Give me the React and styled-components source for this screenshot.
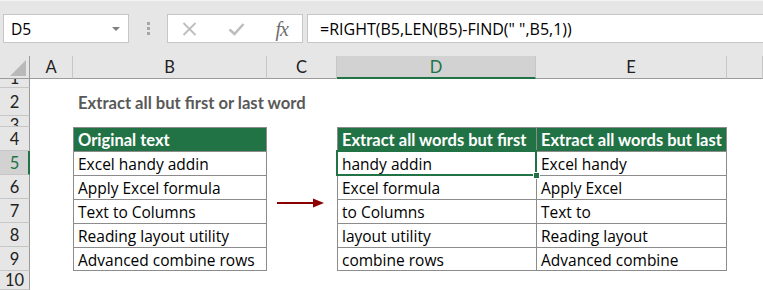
import React from 'react';
import styled, { createGlobalStyle } from 'styled-components';

const GREEN = '#217346';
const FONT = 'Lato, "Open Sans", sans-serif';
const TEXT_FONT = '"Open Sans", Lato, sans-serif';

const GlobalStyle = createGlobalStyle`
  html, body {
    margin: 0;
    padding: 0;
    background: #fff;
  }
  body {
    font-family: ${FONT};
    color: #000;
  }
`;

const Window = styled.div`
  width: 763px;
  height: 290px;
  overflow: hidden;
  background: #fff;
`;

// formula bar
const FormulaBar = styled.div`
  height: 56px;
  box-sizing: border-box;
  background: #e6e6e6;
  border-top: 1px solid #f4f4f4;
  display: flex;
  align-items: flex-start;
  padding: 13px 0 0 3px;
`;

const Box = styled.div`
  height: 29px;
  box-sizing: border-box;
  background: #fff;
  border: 1px solid #c6c6c6;
  display: flex;
  align-items: center;
`;

const NameBox = styled(Box)`
  width: 126px;
  padding: 0 8px 0 7px;
  justify-content: space-between;
  font-family: ${TEXT_FONT};
  font-size: 15.6px;
`;

const DropArrow = styled.span`
  width: 0;
  height: 0;
  border-left: 4px solid transparent;
  border-right: 4px solid transparent;
  border-top: 4px solid #7f7f7f;
`;

const Grip = styled.div`
  width: 38px;
  height: 29px;
  display: flex;
  flex-direction: column;
  align-items: center;
  justify-content: center;
  gap: 2px;
  span {
    width: 3px;
    height: 3px;
    background: #a6a6a6;
  }
`;

const ButtonBox = styled(Box)`
  width: 136px;
  padding: 0 14px 0 14px;
  justify-content: space-between;
`;

const Fx = styled.span`
  font-family: "Liberation Serif", serif;
  font-style: italic;
  font-size: 20px;
  color: #6e6e6e;
  letter-spacing: -1px;
  margin-top: 1px;
`;

const FormulaInput = styled(Box)`
  flex: 1;
  margin-left: 4px;
  margin-right: -2px;
  padding-left: 12px;
  font-family: ${TEXT_FONT};
  font-size: 16px;
  white-space: pre;
`;

// sheet
const Sheet = styled.div`
  position: relative;
  display: grid;
  grid-template-columns: 30px 43px 194px 70px 199px 191px 1fr;
  grid-template-rows: 23px 9px 28px 11px repeat(6, 24px) 1fr;
  height: 234px;
`;

const Corner = styled.div`
  grid-column: 1;
  grid-row: 1;
  background: #e6e6e6;
  border-right: 1px solid #9b9b9b;
  border-bottom: 1px solid #9b9b9b;
  position: relative;
  &::after {
    content: '';
    position: absolute;
    right: 3px;
    bottom: 2px;
    width: 0;
    height: 0;
    border-left: 16px solid transparent;
    border-bottom: 16px solid #b9b9b9;
  }
`;

const ColHead = styled.div`
  grid-column: ${(p) => p.$col};
  grid-row: 1;
  box-sizing: border-box;
  background: ${(p) => (p.$active ? '#d2d2d2' : '#e6e6e6')};
  color: ${(p) => (p.$active ? GREEN : '#222')};
  border-right: 1px solid #c6c6c6;
  border-bottom: ${(p) => (p.$active ? `2px solid ${GREEN}` : '1px solid #9b9b9b')};
  display: flex;
  align-items: center;
  justify-content: center;
  font-size: 16.5px;
  padding-top: ${(p) => (p.$active ? '1px' : '0')};
`;

const RowHead = styled.div`
  grid-column: 1;
  grid-row: ${(p) => p.$row};
  box-sizing: border-box;
  overflow: hidden;
  background: ${(p) => (p.$active ? '#d2d2d2' : '#e6e6e6')};
  color: ${(p) => (p.$active ? GREEN : '#222')};
  border-right: ${(p) => (p.$active ? `2px solid ${GREEN}` : '1px solid #9b9b9b')};
  border-bottom: 1px solid #c6c6c6;
  display: flex;
  justify-content: center;
  align-items: ${(p) => p.$align || 'center'};
  font-size: 16.5px;
  line-height: 18px;
  padding-left: ${(p) => (p.$active ? '1px' : '0')};
`;

const Title = styled.div`
  grid-column: 3 / span 3;
  grid-row: 3;
  align-self: end;
  padding: 0 0 3px 5px;
  font-weight: 700;
  font-size: 16.6px;
  color: #595959;
  white-space: nowrap;
`;

const Cell = styled.div`
  grid-column: ${(p) => p.$col};
  grid-row: ${(p) => p.$row};
  box-sizing: border-box;
  position: relative;
  display: flex;
  align-items: center;
  padding: ${(p) => (p.$head ? '1px 0 0 4px' : '1px 0 0 4px')};
  white-space: nowrap;
  font-family: ${(p) => (p.$head ? FONT : TEXT_FONT)};
  font-size: ${(p) => (p.$head ? '16.5px' : '15.5px')};
  border-top: 1px solid #8c8c8c;
  border-left: 1px solid #8c8c8c;
  border-right: ${(p) => (p.$last ? '1px solid #8c8c8c' : '0')};
  border-bottom: ${(p) => (p.$bottom ? '1px solid #8c8c8c' : '0')};
  background: ${(p) => (p.$head ? GREEN : '#fff')};
  color: ${(p) => (p.$head ? '#fff' : '#000')};
  font-weight: ${(p) => (p.$head ? 700 : 400)};
  z-index: ${(p) => (p.$selected ? 2 : 1)};
  ${(p) =>
    p.$selected &&
    `
    &::after {
      content: '';
      position: absolute;
      inset: -2px -1px -1px -2px;
      border: 2px solid ${GREEN};
    }
  `}
`;

const FillHandle = styled.span`
  position: absolute;
  right: -4px;
  bottom: -4px;
  width: 5px;
  height: 5px;
  background: ${GREEN};
  border: 1px solid #fff;
  z-index: 3;
`;

const Arrow = styled.svg`
  position: absolute;
  left: 277px;
  top: 142px;
`;

const columns = ['A', 'B', 'C', 'D', 'E', ''];
const rows = [
  { n: 1, align: 'flex-end' },
  { n: 2 },
  { n: 3, align: 'flex-start' },
  { n: 4 },
  { n: 5, active: true },
  { n: 6 },
  { n: 7 },
  { n: 8 },
  { n: 9 },
  { n: 10, align: 'flex-start' },
];

const data = [
  ['Excel handy addin', 'handy addin', 'Excel handy'],
  ['Apply Excel formula', 'Excel formula', 'Apply Excel'],
  ['Text to Columns', 'to Columns', 'Text to'],
  ['Reading layout utility', 'layout utility', 'Reading layout'],
  ['Advanced combine rows', 'combine rows', 'Advanced combine'],
];

const App = () => {
  return (
    <Window>
      <GlobalStyle />
      <FormulaBar>
        <NameBox>
          D5
          <DropArrow />
        </NameBox>
        <Grip>
          <span />
          <span />
          <span />
        </Grip>
        <ButtonBox>
          <svg width="15" height="14" viewBox="0 0 15 14">
            <path d="M1.5 1 L13.5 13 M13.5 1 L1.5 13" stroke="#bdbdbd" strokeWidth="1.8" fill="none" />
          </svg>
          <svg width="17" height="14" viewBox="0 0 17 14">
            <path d="M1.5 7.5 L6.5 12 L15.5 2" stroke="#bdbdbd" strokeWidth="2.6" fill="none" />
          </svg>
          <Fx>fx</Fx>
        </ButtonBox>
        <FormulaInput>{'=RIGHT(B5,LEN(B5)-FIND(" ",B5,1))'}</FormulaInput>
      </FormulaBar>

      <Sheet>
        <Corner />
        {columns.map((c, i) => (
          <ColHead key={i} $col={i + 2} $active={c === 'D'}>
            {c}
          </ColHead>
        ))}
        {rows.map((r, i) => (
          <RowHead key={r.n} $row={i + 2} $align={r.align} $active={r.active}>
            {r.n}
          </RowHead>
        ))}

        <Title>Extract all but first or last word</Title>

        <Cell $col={3} $row={5} $head $last>Original text</Cell>
        <Cell $col={5} $row={5} $head>Extract all words but first</Cell>
        <Cell $col={6} $row={5} $head $last>Extract all words but last</Cell>

        {data.map((d, i) => {
          const row = i + 6;
          const bottom = i === data.length - 1;
          return (
            <React.Fragment key={i}>
              <Cell $col={3} $row={row} $last $bottom={bottom}>{d[0]}</Cell>
              <Cell $col={5} $row={row} $bottom={bottom} $selected={i === 0}>
                {d[1]}
                {i === 0 && <FillHandle />}
              </Cell>
              <Cell $col={6} $row={row} $last $bottom={bottom}>{d[2]}</Cell>
            </React.Fragment>
          );
        })}

        <Arrow width="47" height="10" viewBox="0 0 47 10">
          <path d="M0 5 H37" stroke="#8b0000" strokeWidth="2.2" />
          <path d="M36 0.5 L47 5 L36 9.5 Z" fill="#8b0000" />
        </Arrow>
      </Sheet>
    </Window>
  );
};

export default App;
